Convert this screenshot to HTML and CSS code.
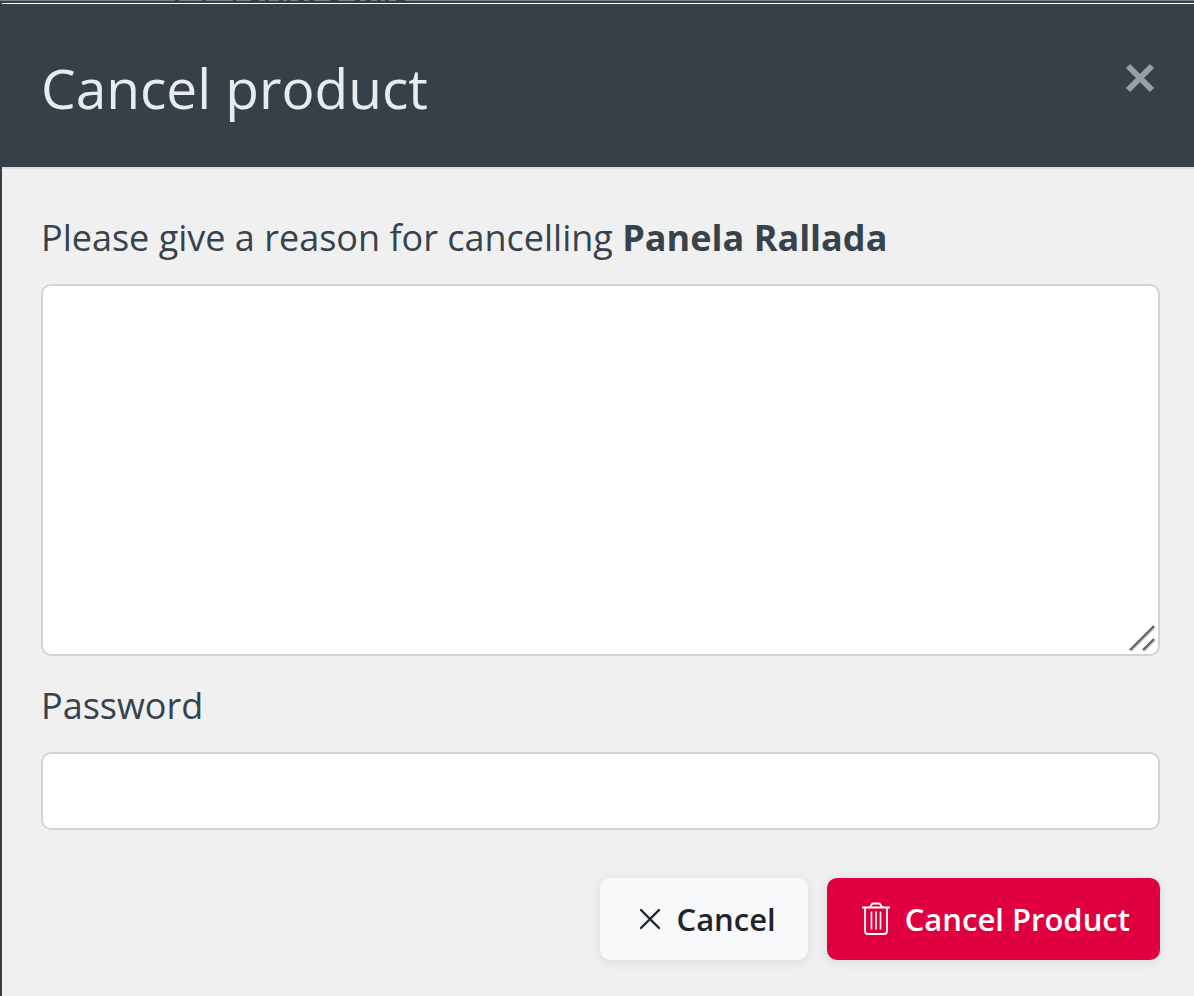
FILE: index.html
```
<!DOCTYPE html>
<html lang="en">
<head>
    <meta charset="UTF-8">
    <title>Cancel product</title>
    <link rel="stylesheet" href="styles.css">
</head>
<body>
    <div class="page-edge">
        <svg width="420" height="1" stroke="#3a4046" stroke-width="2">
            <path d="M175 0h4M202 0h4M233 0h3M251 0h8M265 0h4M279 0h4M287 0h3M298 0h6M309 0h5M330 0h8M355 0h5M366 0h5M377 0h4M385 0h4M396 0h9"/>
        </svg>
    </div>

    <div class="modal" role="dialog" aria-labelledby="modalTitle">
        <div class="modal-header">
            <h1 id="modalTitle">Cancel product</h1>
            <button type="button" class="close-button" aria-label="Close">
                <svg width="30" height="30" viewBox="0 0 30 30" stroke="currentColor" stroke-width="6">
                    <path d="M3 3L27 27M27 3L3 27"/>
                </svg>
            </button>
        </div>

        <form class="modal-body">
            <label for="reason">Please give a reason for cancelling <strong>Panela Rallada</strong></label>
            <div class="textarea-wrap">
                <textarea id="reason" name="reason"></textarea>
                <svg class="grip" width="28" height="28" viewBox="0 0 28 28" fill="none" stroke-width="2">
                    <path d="M3 27L27 3M16 27L27 16" stroke="#c4c4c4"/>
                    <path d="M2 26L26 2M15 26L26 15" stroke="#5c5c5c"/>
                </svg>
            </div>

            <label for="password">Password</label>
            <input type="password" id="password" name="password">

            <div class="modal-actions">
                <button type="button" class="button button-light">
                    <svg width="24" height="24" viewBox="0 0 24 24" stroke="currentColor" stroke-width="2.4" stroke-linecap="round">
                        <path d="M3 3L21 21M21 3L3 21"/>
                    </svg>
                    Cancel
                </button>
                <button type="submit" class="button button-danger">
                    <svg width="30" height="34" viewBox="0 0 30 34" fill="none" stroke="currentColor" stroke-width="1.8">
                        <path d="M1 5.500H29M9 5L10.600 2.500Q11.200 1.500 12.500 1.500H17.500Q18.800 1.500 19.400 2.500L21 5"/>
                        <path d="M4 6V29Q4 32 7 32H23Q26 32 26 29V6"/>
                        <path d="M10.500 9.500V27.500M15 9.500V27.500M19.500 9.500V27.500" stroke-width="1.600"/>
                    </svg>
                    Cancel Product
                </button>
            </div>
        </form>
    </div>
</body>
</html>
```
FILE: styles.css
```
* {
    box-sizing: border-box;
}
body {
    margin: 0;
    min-height: 100vh;
    background-color: #343e48;
    font-family: "Segoe UI", "Open Sans", sans-serif;
    color: #36424c;
}
/* bottom edge of the page behind the modal */
.page-edge {
    height: 3px;
    background: linear-gradient(#7f7f7b, #7f7f7b) 0 0 / 100% 1px no-repeat;
}
.page-edge svg {
    display: block;
}
.modal {
    margin-left: 2px;
    min-height: calc(100vh - 3px);
    background-color: #f0f0f0;
    border-top: 1px solid #fff;
}
.modal-header {
    display: flex;
    justify-content: space-between;
    align-items: flex-start;
    padding: 45px 34px 40px 39px;
    background-color: #364049;
    border-bottom: 2px solid #dbdfe6;
}
.modal-header h1 {
    margin: 0;
    font-size: 55px;
    font-weight: 400;
    line-height: 78px;
    color: #e9ecef;
}
.close-button {
    display: flex;
    margin-top: 14px;
    padding: 0 5px;
    background: none;
    border: none;
    color: #9a9fa3;
    cursor: pointer;
}
.modal-body {
    padding: 41px 34px 36px 39px;
}
label {
    display: block;
    margin-bottom: 18px;
    font-size: 36px;
    line-height: 56px;
}
.textarea-wrap {
    position: relative;
    margin-bottom: 22px;
}
textarea, input {
    display: block;
    width: 100%;
    padding: 12px 24px;
    background-color: #fff;
    border: 2px solid #ced4da;
    border-radius: 10px;
    font-family: inherit;
    font-size: 36px;
    color: inherit;
}
textarea {
    height: 372px;
    resize: none;
}
input {
    height: 78px;
}
.grip {
    position: absolute;
    right: 4px;
    bottom: 4px;
    pointer-events: none;
}
.modal-actions {
    display: flex;
    justify-content: flex-end;
    gap: 19px;
    margin-top: 48px;
}
.button {
    display: flex;
    align-items: center;
    gap: 14px;
    height: 82px;
    border: none;
    border-radius: 10px;
    box-shadow: 0 2px 12px rgba(52, 73, 94, 0.12);
    font-family: inherit;
    font-size: 31px;
    font-weight: 600;
    cursor: pointer;
}
.button-light {
    padding: 0 32px 0 38px;
    background-color: #f8f9fb;
    color: #212529;
}
.button-danger {
    padding: 0 30px 0 34px;
    background-color: #e00040;
    color: #fff;
}
```
